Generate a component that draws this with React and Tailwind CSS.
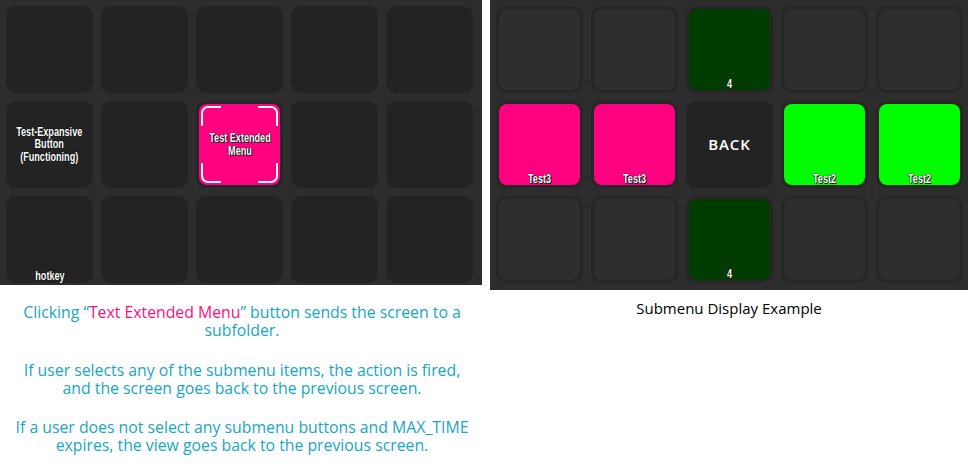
import React from "react";

const label =
  "inline-block whitespace-nowrap scale-x-[0.7] text-white font-bold text-[13px] leading-[12.5px] text-center [font-family:'Liberation_Sans',sans-serif] [text-shadow:0_0_1px_#000,0_0_1px_#000,1px_1px_0_#222]";

function LeftCell({ children, bottom }) {
  return (
    <div
      className={`w-[87px] h-[87px] rounded-[10px] bg-[#232323] flex justify-center ${
        bottom ? "items-end pb-[1px]" : "items-center"
      }`}
    >
      {children && <span className={label}>{children}</span>}
    </div>
  );
}

function ExtendedCell() {
  return (
    <div className="w-[87px] h-[87px] rounded-[10px] bg-[#262626] p-[3px]">
      <div className="relative w-full h-full rounded-[8px] bg-[#ff0080] flex items-center justify-center">
        <span className={label}>
          Test Extended
          <br />
          Menu
        </span>
        <div className="absolute top-[2px] left-[2px] w-5 h-5 border-t-2 border-l-2 border-white rounded-tl-[7px]" />
        <div className="absolute top-[2px] right-[2px] w-5 h-5 border-t-2 border-r-2 border-white rounded-tr-[7px]" />
        <div className="absolute bottom-[2px] left-[2px] w-5 h-5 border-b-2 border-l-2 border-white rounded-bl-[7px]" />
        <div className="absolute bottom-[2px] right-[2px] w-5 h-5 border-b-2 border-r-2 border-white rounded-br-[7px]" />
      </div>
    </div>
  );
}

function RightCell({ fill, text }) {
  return (
    <div className="w-[87px] h-[87px] rounded-[10px] bg-[#262626] p-[3px]">
      <div
        className={`w-full h-full rounded-[8px] flex items-end justify-center ${fill}`}
      >
        {text && <span className={label}>{text}</span>}
      </div>
    </div>
  );
}

function BackCell() {
  return (
    <div className="w-[87px] h-[87px] rounded-[10px] bg-[#232323] flex items-center justify-center">
      <span className="text-white text-[15px] font-semibold tracking-[0.06em] [font-family:'Open_Sans',sans-serif]">
        BACK
      </span>
    </div>
  );
}

export default function App() {
  const empty = "bg-[#2e2e2e]";
  return (
    <div className="w-[968px] h-[472px] bg-white flex overflow-hidden">
      {/* left: main screen */}
      <div className="w-[484px] flex flex-col">
        <div className="w-[482px] h-[285px] bg-[#2d2d2d] p-[6px] grid grid-cols-[repeat(5,87px)] auto-rows-[87px] gap-[8px] overflow-hidden">
          <LeftCell />
          <LeftCell />
          <LeftCell />
          <LeftCell />
          <LeftCell />
          <LeftCell>
            Test-Expansive
            <br />
            Button
            <br />
            (Functioning)
          </LeftCell>
          <LeftCell />
          <ExtendedCell />
          <LeftCell />
          <LeftCell />
          <LeftCell bottom>hotkey</LeftCell>
          <LeftCell />
          <LeftCell />
          <LeftCell />
          <LeftCell />
        </div>
        <div className="mt-[18px] text-center text-[#18a6c6] text-[15.8px] leading-[18px] font-medium [font-family:'Open_Sans',sans-serif]">
          <p className="mb-[22px] px-3">
            Clicking “<span className="text-[#ff0f7b]">Text Extended Menu</span>”
            button sends the screen to a subfolder.
          </p>
          <p className="mb-[21px]">
            If user selects any of the submenu items, the action is fired,
            <br />
            and the screen goes back to the previous screen.
          </p>
          <p>
            If a user does not select any submenu buttons and MAX_TIME
            <br />
            expires, the view goes back to the previous screen.
          </p>
        </div>
      </div>

      {/* right: submenu */}
      <div className="ml-[6px] flex-1 flex flex-col">
        <div className="w-[478px] h-[290px] bg-[#2d2d2d] p-[6px] grid grid-cols-[repeat(5,87px)] auto-rows-[87px] gap-[8px] overflow-hidden">
          <RightCell fill={empty} />
          <RightCell fill={empty} />
          <RightCell fill="bg-[#003b00]" text="4" />
          <RightCell fill={empty} />
          <RightCell fill={empty} />
          <RightCell fill="bg-[#ff0080]" text="Test3" />
          <RightCell fill="bg-[#ff0080]" text="Test3" />
          <BackCell />
          <RightCell fill="bg-[#00ff00]" text="Test2" />
          <RightCell fill="bg-[#00ff00]" text="Test2" />
          <RightCell fill={empty} />
          <RightCell fill={empty} />
          <RightCell fill="bg-[#003b00]" text="4" />
          <RightCell fill={empty} />
          <RightCell fill={empty} />
        </div>
        <div className="mt-[9px] text-center text-black text-[15px] leading-[18px] [font-family:'Open_Sans',sans-serif]">
          Submenu Display Example
        </div>
      </div>
    </div>
  );
}
